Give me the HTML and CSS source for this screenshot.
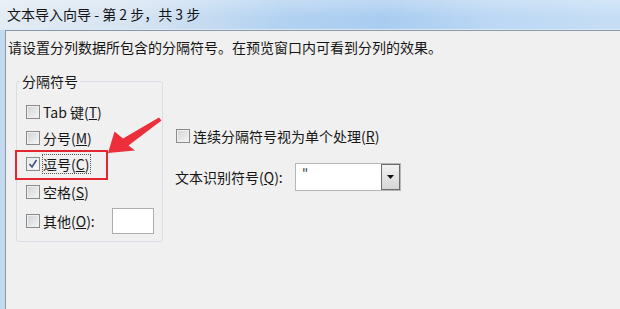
FILE: index.html
```html
<!DOCTYPE html>
<html lang="zh-CN">
<head>
<meta charset="utf-8">
<title>文本导入向导</title>
<link rel="stylesheet" href="styles.css">
</head>
<body>
<div class="window">
  <div class="titlebar">文本导入向导 - 第 2 步，共 3 步</div>
  <div class="frame">
    <div class="content">
      <p class="intro">请设置分列数据所包含的分隔符号。在预览窗口内可看到分列的效果。</p>
      <div class="options">
        <fieldset class="group">
          <legend>分隔符号</legend>
          <label class="opt"><span class="cb"></span><span>Tab 键(<u>T</u>)</span></label>
          <label class="opt"><span class="cb"></span><span>分号(<u>M</u>)</span></label>
          <label class="opt"><span class="cb checked"><svg viewBox="0 0 12 12" width="12" height="12"><path d="M2.5 6 L5 9 L9.5 2" fill="none" stroke="#3d4f8a" stroke-width="1.6"/></svg></span><span class="focus">逗号(<u>C</u>)</span></label>
          <label class="opt"><span class="cb"></span><span>空格(<u>S</u>)</span></label>
          <label class="opt other"><span class="cb"></span><span>其他(<u>O</u>):</span><span class="textbox"></span></label>
        </fieldset>
        <div class="right">
          <label class="opt"><span class="cb"></span><span>连续分隔符号视为单个处理(<u>R</u>)</span></label>
          <div class="qual">
            <span class="qlabel">文本识别符号(<u>Q</u>):</span>
            <div class="combo">
              <span class="val">"</span>
              <span class="btn"><svg viewBox="0 0 7 4" width="7" height="4"><path d="M0 0 H7 L3.5 4 Z" fill="#111"/></svg></span>
            </div>
          </div>
        </div>
      </div>
    </div>
  </div>
  <div class="highlight"></div>
  <svg class="arrow" viewBox="0 0 70 50" width="70" height="50">
    <path d="M8 43 L14.5 21.5 L23 28.5 L59 7.5 L61.5 10.5 L28.5 35.5 L35 40.5 Z" fill="#ec2f3a"/>
  </svg>
</div>
</body>
</html>
```

FILE: styles.css
```css
html, body {
  margin: 0;
  padding: 0;
}
body {
  width: 620px;
  height: 309px;
  overflow: hidden;
  font-family: "Noto Sans CJK SC", "Microsoft YaHei", sans-serif;
  font-size: 14px;
  color: #161616;
}
.window {
  position: relative;
  width: 620px;
  height: 309px;
  background: #c3d9ef;
}
.titlebar {
  height: 29px;
  line-height: 28px;
  padding-left: 7px;
  font-size: 14px;
  color: #141414;
  background:
    linear-gradient(to bottom, rgba(255,255,255,0.25), rgba(255,255,255,0) 60%),
    linear-gradient(to right, #e3ebf3 0%, #d6e4f2 22%, #b3d2f1 45%, #a9ccf0 62%, #bcd8f4 80%, #c6def5 100%);
  border-bottom: 1px solid #dbe8f5;
}
.frame {
  padding-left: 5px;
  background: #c3d9ef;
  height: 279px;
}
.content {
  height: 100%;
  box-sizing: border-box;
  background: #f0f0f0;
  border-left: 1px solid #8a98a8;
  border-top: 1px solid #8a98a8;
  padding: 6px 0 0 2px;
}
.intro {
  margin: 0;
  line-height: 20px;
}
.options {
  display: flex;
  align-items: flex-start;
  margin-top: 14px;
}
.group {
  box-sizing: border-box;
  width: 147px;
  margin: 0 0 0 8px;
  padding: 8px 8px 6px 9px;
  border: 1px solid #d8dee3;
  border-radius: 3px;
  min-width: 0;
}
.group legend {
  padding: 0 2px;
  margin-left: -6px;
  line-height: 20px;
}
.opt {
  display: flex;
  align-items: center;
  height: 26px;
  line-height: 20px;
  white-space: nowrap;
}
.group .opt:nth-of-type(4) {
  margin-top: 2px;
}
.cb {
  box-sizing: border-box;
  flex: none;
  width: 14px;
  height: 14px;
  margin-right: 3px;
  border: 1px solid #8a8a8a;
  background: linear-gradient(135deg, #d0d2d5, #f6f6f6);
  box-shadow: inset 0 0 0 1px #f0f0f0;
  display: flex;
  align-items: center;
  justify-content: center;
}
.cb.checked {
  background: linear-gradient(135deg, #e4e6ea, #fbfbfb);
}
.cb svg {
  display: block;
}
.focus {
  border: 1px dotted #555;
  margin-left: -1px;
  padding: 0 1px 0 0;
  line-height: 18px;
}
.other {
  height: 28px;
  margin-top: 2px;
}
.textbox {
  box-sizing: border-box;
  width: 42px;
  height: 26px;
  margin-left: auto;
  background: #fff;
  border: 1px solid #abadb3;
}
.right {
  margin-left: 13px;
  padding-top: 55px;
}
.right .opt {
  height: 20px;
}
.qual {
  display: flex;
  align-items: center;
  height: 28px;
  margin-top: 17px;
  margin-left: -1px;
}
.qlabel {
  width: 120px;
  flex: none;
  line-height: 20px;
}
.combo {
  box-sizing: border-box;
  width: 106px;
  height: 28px;
  display: flex;
  background: #fff;
  border: 1px solid #b4b6bb;
}
.val {
  flex: 1;
  padding-left: 6px;
  line-height: 22px;
  font-size: 13px;
  color: #333;
}
.btn {
  box-sizing: border-box;
  width: 19px;
  height: 100%;
  border: 1px solid #6c6c6c;
  background: linear-gradient(to bottom, #f2f2f2, #d6d6d6);
  display: flex;
  align-items: center;
  justify-content: center;
}
.btn svg {
  display: block;
}
.highlight {
  position: absolute;
  left: 15px;
  top: 150px;
  width: 93px;
  height: 30px;
  box-sizing: border-box;
  border: 2px solid #e3262f;
}
.arrow {
  position: absolute;
  left: 100px;
  top: 110px;
}
```
